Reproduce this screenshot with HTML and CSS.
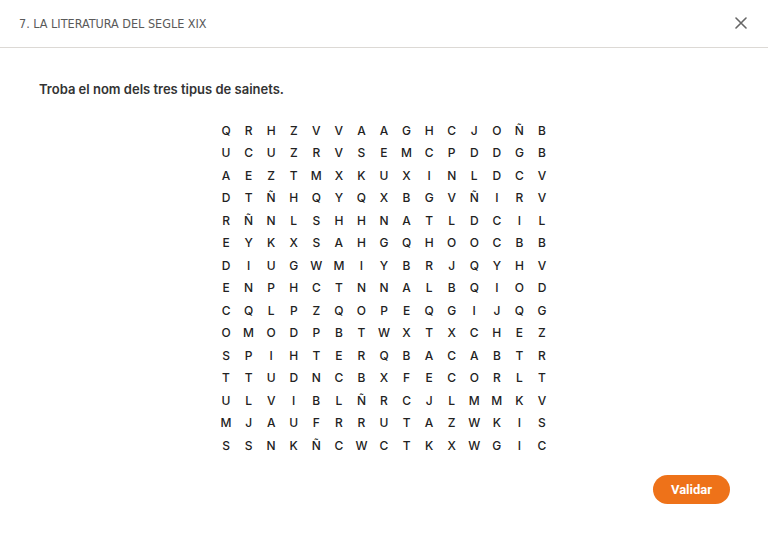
FILE: index.html
```
<!DOCTYPE html>
<html lang="ca">
<head>
<meta charset="utf-8">
<title>7. La literatura del segle XIX</title>
<link rel="stylesheet" href="styles.css">
</head>
<body>
<header class="header">
  <div class="header-title">7. LA LITERATURA DEL SEGLE XIX</div>
  <button class="close" aria-label="Tancar">
    <svg width="12" height="12" viewBox="0 0 12 12"><path d="M1 1 L11 11 M11 1 L1 11" stroke="#666" stroke-width="1.6" fill="none" stroke-linecap="round"/></svg>
  </button>
</header>
<main class="content">
  <p class="question">Troba el nom dels tres tipus de sainets.</p>
  <div class="grid">
    <span>Q</span><span>R</span><span>H</span><span>Z</span><span>V</span><span>V</span><span>A</span><span>A</span><span>G</span><span>H</span><span>C</span><span>J</span><span>O</span><span>Ñ</span><span>B</span>
    <span>U</span><span>C</span><span>U</span><span>Z</span><span>R</span><span>V</span><span>S</span><span>E</span><span>M</span><span>C</span><span>P</span><span>D</span><span>D</span><span>G</span><span>B</span>
    <span>A</span><span>E</span><span>Z</span><span>T</span><span>M</span><span>X</span><span>K</span><span>U</span><span>X</span><span>I</span><span>N</span><span>L</span><span>D</span><span>C</span><span>V</span>
    <span>D</span><span>T</span><span>Ñ</span><span>H</span><span>Q</span><span>Y</span><span>Q</span><span>X</span><span>B</span><span>G</span><span>V</span><span>Ñ</span><span>I</span><span>R</span><span>V</span>
    <span>R</span><span>Ñ</span><span>N</span><span>L</span><span>S</span><span>H</span><span>H</span><span>N</span><span>A</span><span>T</span><span>L</span><span>D</span><span>C</span><span>I</span><span>L</span>
    <span>E</span><span>Y</span><span>K</span><span>X</span><span>S</span><span>A</span><span>H</span><span>G</span><span>Q</span><span>H</span><span>O</span><span>O</span><span>C</span><span>B</span><span>B</span>
    <span>D</span><span>I</span><span>U</span><span>G</span><span>W</span><span>M</span><span>I</span><span>Y</span><span>B</span><span>R</span><span>J</span><span>Q</span><span>Y</span><span>H</span><span>V</span>
    <span>E</span><span>N</span><span>P</span><span>H</span><span>C</span><span>T</span><span>N</span><span>N</span><span>A</span><span>L</span><span>B</span><span>Q</span><span>I</span><span>O</span><span>D</span>
    <span>C</span><span>Q</span><span>L</span><span>P</span><span>Z</span><span>Q</span><span>O</span><span>P</span><span>E</span><span>Q</span><span>G</span><span>I</span><span>J</span><span>Q</span><span>G</span>
    <span>O</span><span>M</span><span>O</span><span>D</span><span>P</span><span>B</span><span>T</span><span>W</span><span>X</span><span>T</span><span>X</span><span>C</span><span>H</span><span>E</span><span>Z</span>
    <span>S</span><span>P</span><span>I</span><span>H</span><span>T</span><span>E</span><span>R</span><span>Q</span><span>B</span><span>A</span><span>C</span><span>A</span><span>B</span><span>T</span><span>R</span>
    <span>T</span><span>T</span><span>U</span><span>D</span><span>N</span><span>C</span><span>B</span><span>X</span><span>F</span><span>E</span><span>C</span><span>O</span><span>R</span><span>L</span><span>T</span>
    <span>U</span><span>L</span><span>V</span><span>I</span><span>B</span><span>L</span><span>Ñ</span><span>R</span><span>C</span><span>J</span><span>L</span><span>M</span><span>M</span><span>K</span><span>V</span>
    <span>M</span><span>J</span><span>A</span><span>U</span><span>F</span><span>R</span><span>R</span><span>U</span><span>T</span><span>A</span><span>Z</span><span>W</span><span>K</span><span>I</span><span>S</span>
    <span>S</span><span>S</span><span>N</span><span>K</span><span>Ñ</span><span>C</span><span>W</span><span>C</span><span>T</span><span>K</span><span>X</span><span>W</span><span>G</span><span>I</span><span>C</span>
  </div>
  <div class="actions">
    <button class="validate">Validar</button>
  </div>
</main>
</body>
</html>
```
FILE: styles.css
```
* { box-sizing: border-box; }
html, body { margin: 0; padding: 0; background: #fff; }
body { width: 768px; height: 546px; overflow: hidden; font-family: Inter, "Liberation Sans", sans-serif; }

.header {
  height: 48px;
  border-bottom: 1px solid #dcd9d5;
  display: flex;
  align-items: center;
  justify-content: space-between;
  padding: 0 19px 1px 19px;
}
.header-title {
  font-family: "DejaVu Sans Condensed", "DejaVu Sans", sans-serif;
  font-stretch: condensed;
  font-size: 12.5px;
  color: #5a5a5a;
  letter-spacing: 0;
}
.close {
  border: 0;
  background: none;
  padding: 0;
  margin-right: 2px;
  width: 12px;
  height: 12px;
  display: flex;
}

.content { padding: 0 38px 0 39px; }
.question {
  margin: 31px 0 0 0;
  line-height: 20px;
  font-size: 13px;
  font-weight: 600;
  color: #333;
}
.grid {
  margin: 20px auto 0 auto;
  width: 338.5px;
  display: grid;
  grid-template-columns: repeat(15, 1fr);
  grid-auto-rows: 22.5px;
  transform: translate(-0.5px, -0.5px);
}
.grid span {
  display: flex;
  align-items: center;
  justify-content: center;
  font-size: 12px;
  font-weight: 500;
  color: #222;
}
.actions {
  display: flex;
  justify-content: flex-end;
  margin-top: 18px;
}
.validate {
  width: 77px;
  height: 29px;
  border: 0;
  border-radius: 15px;
  background: #ee7219;
  color: #fff;
  font-family: Roboto, "Liberation Sans", sans-serif;
  font-weight: 700;
  font-size: 13px;
  padding: 0;
}
```
